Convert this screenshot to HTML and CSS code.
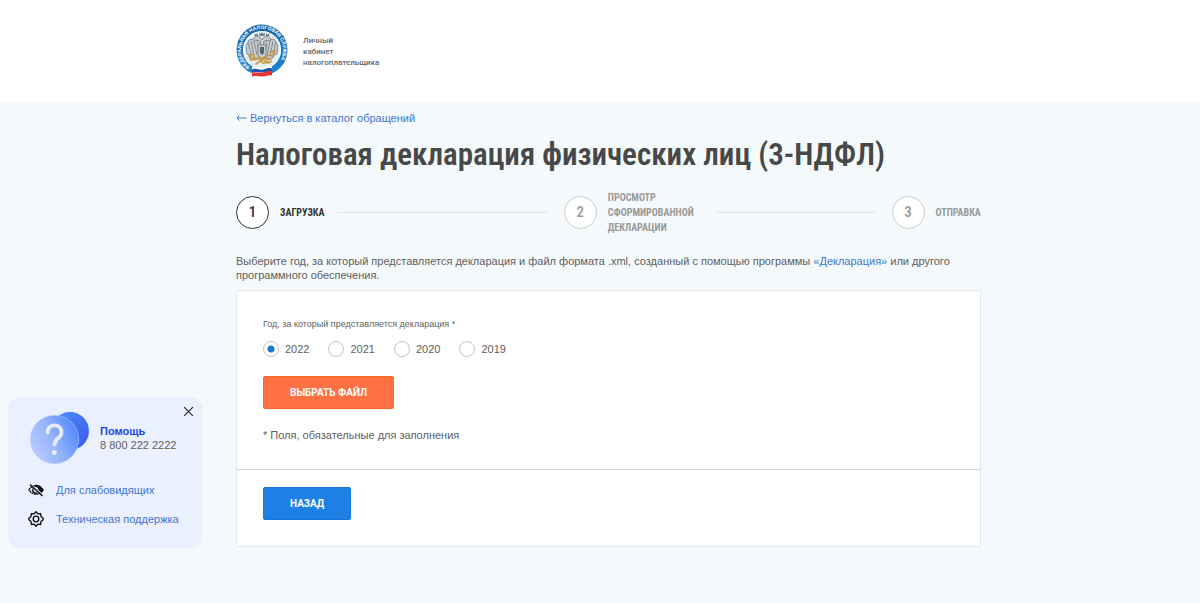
FILE: index.html
```html
<!DOCTYPE html>
<html lang="ru">
<head>
<meta charset="utf-8">
<meta name="viewport" content="width=device-width, initial-scale=1">
<title>Налоговая декларация физических лиц (3-НДФЛ)</title>
<link rel="stylesheet" href="styles.css">
</head>
<body>
<header class="header">
  <a class="brand" href="#">
    <svg class="brand-logo" viewBox="0 0 52 54" role="img" aria-label="Федеральная налоговая служба">
      <defs>
        <path id="ring" d="M14 43.200A21 21 0 1 1 38 43.200"/>
        <linearGradient id="rim" x1="0" y1="0" x2="0" y2="1"><stop offset="0" stop-color="#1565a8"/><stop offset="1" stop-color="#1c86d0"/></linearGradient>
      </defs>
      <circle cx="26" cy="26" r="25.500" fill="url(#rim)"/>
      <circle cx="26" cy="26" r="18.500" fill="#e4f0f8" stroke="#fff" stroke-width="1.200"/>
      <text class="ring-text"><textPath href="#ring">ФЕДЕРАЛЬНАЯ НАЛОГОВАЯ СЛУЖБА</textPath></text>
      <g fill="#c9cdd0" stroke="#78838b" stroke-width=".9" stroke-linejoin="round">
        <path d="M25 21c-3-5-8-7-12-5l-3 6 1 8 3 1 1 3 3 0 2 2 5-3zM27 21c3-5 8-7 12-5l3 6-1 8-3 1-1 3-3 0-2 2-5-3z"/>
        <path d="M12 18l3 12M15 17l3 15M18 17l3 14M21 19l2 11M40 18l-3 12M37 17l-3 15M34 17l-3 14M31 19l-2 11" fill="none"/>
        <path d="M25 23l-1-6-4-1-2 2-1-3 3-3 4 1 2 3 2-3 4-1 3 3-1 3-2-2-4 1-1 6z"/>
        <path d="M22 21h8v8c0 3-2 5-4 6-2-1-4-3-4-6z"/>
      </g>
      <path d="M23.500 12l-.5-3 2 1L26 8l1 2 2-1-.5 3zM19 12l-.5-2.500 2 1 1-1.500.5 3zM30 12l.5-3 1 1.500 2-1L33 12z" fill="#6c767d"/>
      <path d="M24 23h4v6l-2 2-2-2z" fill="#58656e"/>
      <g fill="none" stroke="#c99a45" stroke-width="1.700" stroke-linecap="round">
        <path d="M13 32l4-2 2 4-4 2zM18 36l7-2 8 5M34 28l5-1-2 5-4-1M20 40l13-9M28 33l7 3M22 33l5 6 8-1"/>
      </g>
      <path d="M16 43c4-2 7 1 11 0s6-2 9-1v9c-4-1-6 1-10 1s-5-1-10 0z" fill="#fff"/>
      <path d="M16 45.500c4-2 7 1 11 0s6-2 9-1v3c-4-1-6 1-10 1s-6-1-10 0z" fill="#1a55b0"/>
      <path d="M16 48.500c4-1 7 1 11 0s6-2 9-1v4c-4-1-6 1-10 1s-6-1-10 0z" fill="#e33332"/>
    </svg>
    <span class="brand-name">Личный<br>кабинет<br>налогоплательщика</span>
  </a>
</header>

<main class="page">
  <a class="back-link" href="#"><svg class="back-arrow" viewBox="0 0 11 8" aria-hidden="true"><path d="M3.500 1.500L1 4l2.500 2.500M1 4h9.500"/></svg>Вернуться в каталог обращений</a>
  <h1 class="title">Налоговая декларация физических лиц (3-НДФЛ)</h1>

  <ol class="steps">
    <li class="step step-active"><span class="step-number">1</span><span class="step-label">Загрузка</span></li>
    <li class="step"><span class="step-number">2</span><span class="step-label step-label-wide">Просмотр сформированной декларации</span></li>
    <li class="step"><span class="step-number">3</span><span class="step-label">Отправка</span></li>
  </ol>

  <p class="intro">Выберите год, за который представляется декларация и файл формата .xml, созданный с помощью программы <a href="#">«Декларация»</a> или другого программного обеспечения.</p>

  <form class="card">
    <div class="card-body">
      <fieldset class="years">
        <legend class="years-legend">Год, за который представляется декларация *</legend>
        <div class="years-list">
          <label class="year"><input class="radio" type="radio" name="year" value="2022" checked>2022</label>
          <label class="year"><input class="radio" type="radio" name="year" value="2021">2021</label>
          <label class="year"><input class="radio" type="radio" name="year" value="2020">2020</label>
          <label class="year"><input class="radio" type="radio" name="year" value="2019">2019</label>
        </div>
      </fieldset>
      <button class="button button-file" type="button">Выбрать файл</button>
      <p class="note">* Поля, обязательные для заполнения</p>
    </div>
    <div class="card-footer">
      <button class="button button-back" type="button">Назад</button>
    </div>
  </form>
</main>

<aside class="help" aria-label="Помощь">
  <button class="help-close" type="button" aria-label="Закрыть"><svg viewBox="0 0 10 10"><path d="M1 1l8 8M9 1L1 9"/></svg></button>
  <div class="help-top">
    <svg class="help-icon" viewBox="0 0 60 54" aria-hidden="true">
      <defs>
        <linearGradient id="disc" x1="0" y1="0" x2="1" y2="1"><stop offset="0" stop-color="#4f8dff"/><stop offset="1" stop-color="#3a5ae8"/></linearGradient>
        <linearGradient id="glass" x1="0.100" y1="0.700" x2="0.950" y2="0.300"><stop offset="0" stop-color="#b3c8fc"/><stop offset=".45" stop-color="#94b3fa"/><stop offset="1" stop-color="#568cff"/></linearGradient>
      </defs>
      <circle cx="40" cy="20" r="19" fill="url(#disc)"/>
      <circle cx="24.500" cy="28.500" r="24.200" fill="url(#glass)" stroke="#b5cafc" stroke-width=".6"/>
      <path d="M17.500 21.500c0-9.500 14-9.500 14 0 0 6-7 5.500-7 12" fill="none" stroke="#e6edff" stroke-width="3.800" stroke-linecap="round"/>
      <circle cx="24.300" cy="41.500" r="2.500" fill="#e6edff"/>
    </svg>
    <div class="help-contact"><strong class="help-title">Помощь</strong><span>8 800 222 2222</span></div>
  </div>
  <a class="help-link" href="#">
    <svg viewBox="0 0 16 16" aria-hidden="true"><path d="M1 8c3-6 11-6 14 0-3 5-10 6-14 0z" fill="none" stroke="#111" stroke-width="1.500" stroke-dasharray="2 .6"/><path d="M5 3.500C9 2 13.500 4 15.500 8L13 11.500 10.500 9C11 6.500 9 4.500 7 5z" fill="#111"/><path d="M5 6.500c-1 3 1 5 4 4.500" fill="none" stroke="#111" stroke-width="1.400"/><path d="M3.500 2.200l12 11" stroke="#ebf0ff" stroke-width="1"/><path d="M2 2.500l12.500 11.500" stroke="#111" stroke-width="1.500"/></svg>
    <span>Для слабовидящих</span>
  </a>
  <a class="help-link" href="#">
    <svg viewBox="0 0 24 24" aria-hidden="true" fill="none" stroke="#111" stroke-width="2" stroke-linejoin="round"><path d="M12 1l2.800 3.200 4.300-.3.300 4.200L22.800 11v2l-3.400 2.900-.3 4.200-4.300-.3L12 23l-2.800-3.200-4.300.3-.3-4.200L1.200 13v-2l3.400-2.900.3-4.200 4.300.3z"/><circle cx="12" cy="12" r="4.200"/></svg>
    <span>Техническая поддержка</span>
  </a>
</aside>
</body>
</html>
```
FILE: styles.css
```css
* {
  box-sizing: border-box;
}

body {
  margin: 0;
  min-height: 100vh;
  background: #f4f9fc;
  color: #606060;
  font-family: "Liberation Sans", Arial, sans-serif;
  font-size: 11px;
  line-height: 14px;
}

a {
  color: #4376cf;
  text-decoration: none;
}

.header {
  display: flex;
  padding: 24px 18.25% 25px 19.6667%;
  background: #fff;
}

.brand {
  display: flex;
  align-items: center;
  gap: 15px;
  color: #666;
}

.brand-logo {
  width: 52px;
  height: 54px;
}

.ring-text {
  fill: #fff;
  font: bold 5px "Liberation Sans", Arial, sans-serif;
}

.brand-name {
  font: 500 8px/11px Roboto, sans-serif;
}

.page {
  padding: 8px 18.25% 40px 19.6667%;
}

.back-link {
  display: inline-flex;
  align-items: center;
  gap: 3px;
}

.back-arrow {
  width: 11px;
  height: 8px;
  fill: none;
  stroke: #4376cf;
}

.title {
  margin: 8px 0 13px;
  color: #484848;
  font: 600 31px/44px "Roboto Condensed", "Liberation Sans Narrow", "Liberation Sans", sans-serif;
}

.steps {
  display: flex;
  align-items: center;
  margin: 0 0 19px;
  padding: 0;
  list-style: none;
  color: #999;
  font: bold 10px/15px "Roboto Condensed", "Liberation Sans Narrow", "Liberation Sans", sans-serif;
}

.step {
  display: flex;
  flex: 0 0 44%;
  align-items: center;
}

.step:last-child {
  flex: 1;
}

.step:not(:last-child)::after {
  flex: 1;
  height: 1px;
  margin: 0 16px 0 13px;
  background: #dfe4e8;
  content: "";
}

.step-number {
  display: grid;
  flex: none;
  width: 33px;
  height: 33px;
  margin-right: 11px;
  place-items: center;
  border: 1px solid #ccc;
  border-radius: 50%;
  background: #fff;
  font-size: 15px;
  font-weight: 500;
}

.step-active {
  color: #333;
}

.step-active .step-number {
  border-color: #333;
}

.step-label {
  text-transform: uppercase;
}

.step-label-wide {
  width: 95px;
}

.intro {
  margin: 0 0 8px;
}

.card {
  border: 1px solid #e4e8eb;
  border-radius: 2px;
  background: #fff;
}

.card-body {
  padding: 26px;
  border-bottom: 1px solid #d0d3d5;
}

.years {
  margin: 0;
  padding: 0;
  border: 0;
}

.years-legend {
  padding: 0;
  font-size: 9px;
}

.years-list {
  display: flex;
  gap: 19px;
  margin-top: 10px;
}

.year {
  display: flex;
  align-items: center;
  gap: 6px;
}

.radio {
  width: 16px;
  height: 16px;
  margin: 0;
  border: 1px solid #c4c4c4;
  border-radius: 50%;
  background: #fff;
  appearance: none;
}

.radio:checked {
  background: radial-gradient(circle, #1976d2 3px, #fff 4px);
}

.button {
  height: 33px;
  padding: 0 26px;
  border: 1px solid;
  border-radius: 2px;
  color: #fff;
  font: bold 10px/14px Roboto, sans-serif;
  text-transform: uppercase;
}

.button-file {
  margin-top: 19px;
  border-color: #ff661f;
  background: #ff7043;
}

.button-back {
  border-color: #1677dc;
  background: #1e80e4;
}

.note {
  margin: 19px 0 1px;
}

.card-footer {
  padding: 17px 26px 26px;
}

.help {
  position: fixed;
  bottom: 55px;
  left: 8px;
  width: 195px;
  padding: 14px 20px 21px;
  border-radius: 12px;
  background: #ebf0ff;
}

.help-close {
  position: absolute;
  top: 9px;
  right: 9px;
  display: grid;
  width: 11px;
  height: 11px;
  padding: 0;
  border: 0;
  background: none;
}

.help-close svg {
  fill: none;
  stroke: #222;
}

.help-top {
  display: flex;
  align-items: center;
  gap: 10px;
  margin: 0 0 17px 2px;
}

.help-icon {
  width: 60px;
  height: 54px;
}

.help-contact {
  display: flex;
  flex-direction: column;
  white-space: nowrap;
}

.help-title {
  color: #2147e8;
}

.help-link {
  display: flex;
  align-items: center;
  gap: 12px;
  white-space: nowrap;
}

.help-link + .help-link {
  margin-top: 13px;
}

.help-link svg {
  flex: none;
  width: 16px;
  height: 16px;
}
```
